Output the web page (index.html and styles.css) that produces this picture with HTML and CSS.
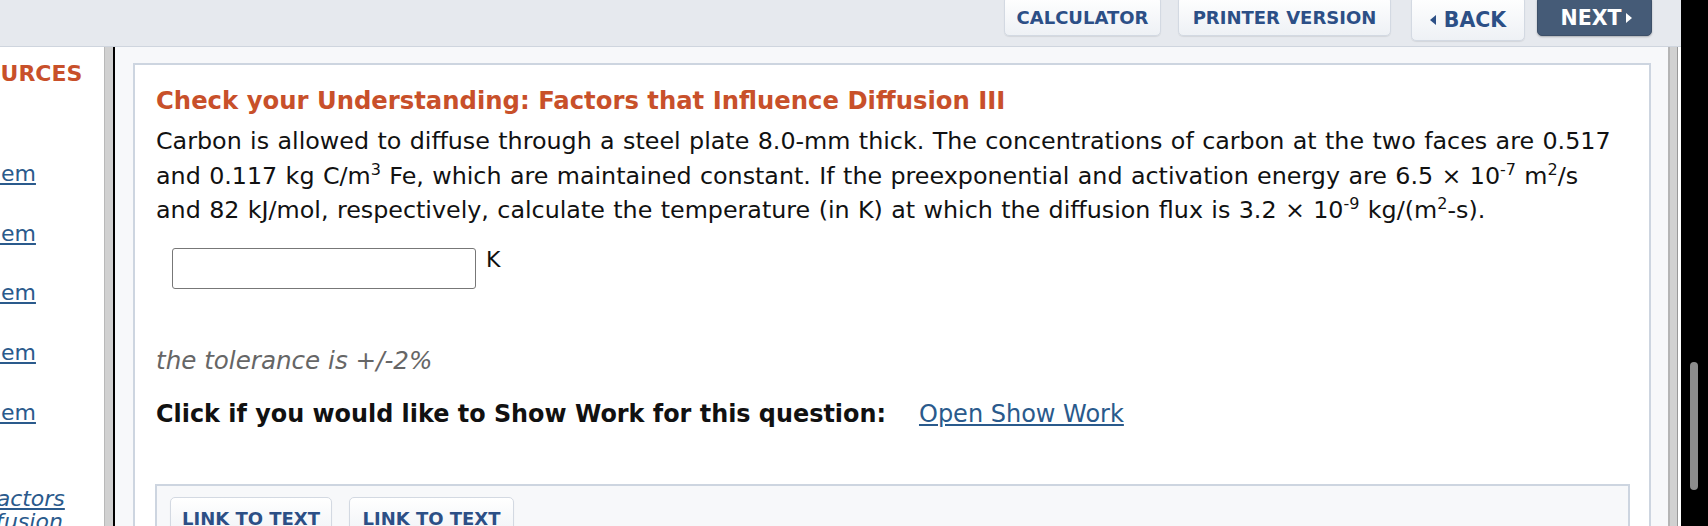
FILE: index.html
```html
<!DOCTYPE html>
<html lang="en">
<head>
<meta charset="utf-8">
<title>Check your Understanding</title>
<link rel="stylesheet" href="styles.css">
</head>
<body>
<div class="window">
  <div class="app">
    <header class="topbar">
      <button class="btn btn-calc">CALCULATOR</button>
      <button class="btn btn-printer">PRINTER VERSION</button>
      <button class="btn btn-back"><span class="tri tri-left"></span>BACK</button>
      <button class="btn btn-next">NEXT<span class="tri tri-right"></span></button>
    </header>
    <div class="main-row">
      <aside class="sidebar">
        <h3 class="side-heading">RESOURCES</h3>
        <ul class="side-list">
          <li><a href="#" class="side-link">Problem</a></li>
          <li><a href="#" class="side-link">Problem</a></li>
          <li><a href="#" class="side-link">Problem</a></li>
          <li><a href="#" class="side-link">Problem</a></li>
          <li><a href="#" class="side-link">Problem</a></li>
        </ul>
        <a href="#" class="side-anim"><span class="anim-l1">Factors</span><span class="anim-l2">Diffusion</span></a>
      </aside>
      <div class="split split-left"></div>
      <main class="content">
        <section class="panel">
          <h2 class="title">Check your Understanding: Factors that Influence Diffusion III</h2>
          <p class="question">Carbon is allowed to diffuse through a steel plate 8.0-mm thick. The concentrations of carbon at the two faces are 0.517 and 0.117 kg C/m<sup>3</sup> Fe, which are maintained constant. If the preexponential and activation energy are 6.5 &times; 10<sup>-7</sup> m<sup>2</sup>/s and 82 kJ/mol, respectively, calculate the temperature (in K) at which the diffusion flux is 3.2 &times; 10<sup>-9</sup> kg/(m<sup>2</sup>-s).</p>
          <div class="answer-row">
            <input class="answer" type="text">
            <span class="unit">K</span>
          </div>
          <p class="tolerance">the tolerance is +/-2%</p>
          <p class="showwork"><strong>Click if you would like to Show Work for this question:</strong><a href="#" class="showwork-link">Open Show Work</a></p>
          <div class="links-box">
            <button class="btn btn-link1">LINK TO TEXT</button>
            <button class="btn btn-link2">LINK TO TEXT</button>
          </div>
        </section>
      </main>
      <div class="split split-right"></div>
    </div>
  </div>
  <div class="desktop"><div class="scroll-thumb"></div></div>
</div>
</body>
</html>
```
FILE: styles.css
```css
* { box-sizing: border-box; }
html, body { margin: 0; padding: 0; }
body {
  width: 1708px;
  height: 526px;
  overflow: hidden;
  font-family: "DejaVu Sans", Verdana, sans-serif;
  color: #111;
  background: #000;
}
.window { display: flex; height: 526px; }
.app { width: 1681px; display: flex; flex-direction: column; background: #fff; }
.desktop { width: 27px; background: #000; display: flex; flex-direction: column; padding: 362px 0 0 9px; }
.scroll-thumb { width: 8px; height: 128px; border-radius: 4px; background: #8d8d8d; }

/* top bar */
.topbar {
  height: 47px;
  flex: none;
  background: #e6e9ee;
  border-bottom: 1px solid #cfd5de;
  display: flex;
  justify-content: flex-end;
  align-items: flex-start;
  padding-right: 29px;
}
.btn {
  font-family: "DejaVu Sans", Verdana, sans-serif;
  font-weight: bold;
  font-size: 18px;
  color: #2c4f86;
  background: linear-gradient(#ffffff, #eef1f5);
  border: 1px solid #d3d9e2;
  border-radius: 5px;
  box-shadow: 0 1px 1px rgba(0,0,0,0.08);
  padding: 0;
  display: inline-flex;
  align-items: center;
  justify-content: center;
  cursor: pointer;
}
.topbar .btn { margin-top: -4px; height: 40px; padding-top: 3px; }
.btn-calc { width: 157px; }
.btn-printer { width: 213px; margin-left: 17px; }
.topbar .btn-back { width: 114px; margin-left: 20px; height: 45px; padding-top: 2px; font-size: 20.5px; }
.topbar .btn-next { width: 115px; margin-left: 12px; background: #455b77; color: #fff; border-color: #3d5069; box-shadow: 0 1px 2px rgba(0,0,0,0.25); font-size: 20.5px; padding-left: 4px; }
.tri { display: inline-block; width: 0; height: 0; border-top: 5.5px solid transparent; border-bottom: 5.5px solid transparent; }
.tri-left { border-right: 6px solid #2c4f86; margin-right: 8px; }
.tri-right { border-left: 6px solid #fff; margin-left: 5px; }

/* main row */
.main-row { flex: 1; display: flex; min-height: 0; }
.sidebar { width: 104px; flex: none; background: #fff; overflow: hidden; padding-top: 9px; }
.side-heading { margin: 0 0 0 -66px; font-size: 22px; line-height: 36px; color: #c8502a; font-weight: bold; white-space: nowrap; }
.side-list { list-style: none; margin: 64px 0 0 0; padding: 0; }
.side-list li { height: 59.7px; line-height: 36px; white-space: nowrap; }
.side-link { margin-left: -54px; font-size: 22px; color: #2a5a8c; }
.side-anim { display: flex; flex-direction: column; margin-top: 33px; font-size: 22px; line-height: 23px; font-style: italic; color: #2a5a8c; white-space: nowrap; text-decoration: underline; }
.anim-l1 { margin-left: -16px; }
.anim-l2 { margin-left: -35px; }

.split { flex: none; }
.split-left { width: 11px; background: #d1d1d1; border-left: 1px solid #b9b9b9; border-right: 2px solid #000; }
.split-right { width: 13px; background: #d1d1d1; border-left: 2px solid #b5b5b5; border-right: 3px solid #fff; box-shadow: inset -1px 0 0 #999; }

.content { flex: 1; background: #f7f8fa; padding: 16px 17px 0 18px; overflow: hidden; }
.panel { background: #fff; border: 2px solid #cdd5e0; border-bottom: none; height: 100%; padding: 18px 32px 0 21px; }
.title { margin: 0; font-size: 24.3px; line-height: 35px; color: #c8502a; font-weight: bold; }
.question { margin: 6px 0 0 0; font-size: 23.8px; line-height: 34.5px; word-spacing: 0.8px; }
.question sup { font-size: 16px; line-height: 0; vertical-align: 9px; }
.answer-row { display: flex; align-items: flex-start; margin: 20px 0 0 16px; }
.answer { width: 304px; height: 41px; border: 1px solid #777; border-radius: 3px; background: #fff; margin: 0; }
.unit { margin-left: 10px; font-size: 22px; line-height: 24px; }
.tolerance { margin: 54px 0 0 0; font-size: 24.6px; line-height: 35px; font-style: italic; color: #666; }
.showwork { margin: 19px 0 0 0; font-size: 24px; line-height: 35px; }
.showwork strong { font-size: 23.9px; }
.showwork-link { margin-left: 33px; color: #2a5a8c; }
.links-box { margin: 52px -13px 0 -1px; border: 2px solid #cdd5e0; border-bottom: none; background: #f7f8fa; height: 60px; padding: 11px 13px 0; display: flex; gap: 17px; align-items: flex-start; }
.links-box .btn { height: 44px; }
.btn-link1 { width: 162px; }
.btn-link2 { width: 165px; }
```
